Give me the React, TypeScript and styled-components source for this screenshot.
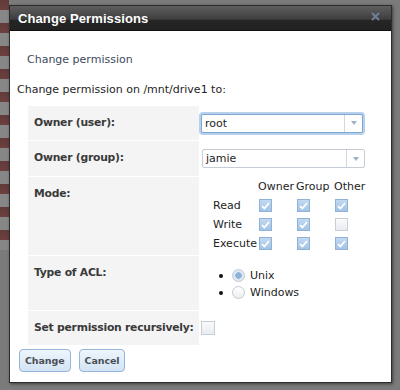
import styled, { createGlobalStyle } from "styled-components";

const GlobalStyle = createGlobalStyle`
  html, body {
    margin: 0;
    padding: 0;
    background: #7b7b7b;
  }
  body {
    font-family: "DejaVu Sans", Verdana, sans-serif;
  }
`;

const Page = styled.div`
  position: relative;
  width: 400px;
  height: 390px;
  overflow: hidden;
  background: #7b7b7b;
`;

const Backdrop = styled.div`
  position: absolute;
  left: 0;
  top: 0;
  width: 9px;
  height: 250px;
  background: repeating-linear-gradient(
    180deg,
    #5a2a2a 0px,
    #6b3030 10px,
    #8a8a8a 10px,
    #8a8a8a 23px
  );
  opacity: 0.8;
`;

const Dialog = styled.div`
  position: absolute;
  left: 9px;
  top: 5px;
  width: 381px;
  height: 376px;
  border: 1px solid #2c2c2c;
  box-shadow: 1px 1px 3px rgba(0, 0, 0, 0.5);
  background: #fff;
  display: flex;
  flex-direction: column;
`;

const TitleBar = styled.div`
  height: 24px;
  display: flex;
  align-items: center;
  justify-content: space-between;
  padding: 0 11px 0 8px;
  background: linear-gradient(180deg, #5e5e5e 0%, #3e3e3e 55%, #252525 60%, #222 100%);
  border-bottom: 1px solid #111;
`;

const Title = styled.span`
  color: #fff;
  font-family: "Liberation Sans", Arial, sans-serif;
  font-weight: bold;
  font-size: 13px;
  letter-spacing: 0.1px;
`;

const CloseIcon = styled.span`
  display: flex;
  width: 9px;
  height: 9px;
  margin-top: -3px;
`;

const Body = styled.div`
  flex: 1;
  padding: 0 0 0 7px;
  display: flex;
  flex-direction: column;
`;

const Subtitle = styled.div`
  margin: 22px 0 0 10px;
  font-size: 11px;
  color: #3d4a5c;
  line-height: 14px;
`;

const Intro = styled.div`
  margin: 16px 0 0 0;
  font-size: 11px;
  color: #1e1e1e;
  line-height: 14px;
`;

const FormTable = styled.div`
  margin: 9px 0 0 11px;
  display: grid;
  grid-template-columns: 171px 1fr;
  row-gap: 1px;
`;

const LabelCell = styled.div<{ h: number }>`
  background: #f4f4f4;
  height: ${({ h }) => h}px;
  padding: 10px 0 0 6px;
  box-sizing: border-box;
  font-weight: bold;
  font-size: 10.8px;
  letter-spacing: -0.25px;
  color: #3a3a3a;
  white-space: nowrap;
`;

const ValueCell = styled.div<{ h: number }>`
  height: ${({ h }) => h}px;
  padding-left: 2px;
  box-sizing: border-box;
  display: flex;
  align-items: center;
`;

const Select = styled.div<{ focused?: boolean }>`
  width: ${({ focused }) => (focused ? 160 : 161)}px;
  height: 17px;
  margin-left: ${({ focused }) => (focused ? 0 : 1)}px;
  display: flex;
  background: #fff;
  border: 1px solid ${({ focused }) => (focused ? "#7fa6d2" : "#c6ccd4")};
  box-shadow: ${({ focused }) => (focused ? "0 0 0 2px #b7d0ec" : "none")};
  border-radius: 2px;
  font-size: 11px;
  color: #1e1e1e;
`;

const SelectText = styled.span`
  flex: 1;
  padding-left: 3px;
  line-height: 17px;
`;

const SelectArrow = styled.span`
  width: 17px;
  border-left: 1px solid #d2d7de;
  display: flex;
  align-items: center;
  justify-content: center;
  &::after {
    content: "";
    border-left: 3.5px solid transparent;
    border-right: 3.5px solid transparent;
    border-top: 4px solid #9fb1c6;
  }
`;

const ModeGrid = styled.div`
  display: grid;
  grid-template-columns: 46px 38px 38px 38px;
  grid-auto-rows: 19px;
  align-items: center;
  margin: 0 0 0 12px;
  font-size: 11px;
  color: #1e1e1e;
  align-self: flex-start;
`;

const ModeHead = styled.span`
  justify-self: start;
  margin-left: -1px;
`;

const Box = styled.span<{ checked?: boolean; size?: number }>`
  width: ${({ size }) => size ?? 13}px;
  height: ${({ size }) => size ?? 13}px;
  box-sizing: border-box;
  border: 1px solid ${({ checked }) => (checked ? "#8fb2d6" : "#c8ced6")};
  background: ${({ checked }) =>
    checked
      ? "linear-gradient(180deg, #c2d9f0 0%, #a3c4e5 100%)"
      : "linear-gradient(180deg, #fafafa 0%, #e8ecf0 100%)"};
  display: flex;
  align-items: center;
  justify-content: center;
`;

const AclList = styled.ul`
  margin: 11px 0 0 0;
  padding: 0 0 0 18px;
  list-style: none;
  font-size: 11px;
  color: #1e1e1e;
  align-self: flex-start;
`;

const AclItem = styled.li`
  height: 17px;
  display: flex;
  align-items: center;
  gap: 5px;
  &::before {
    content: "";
    width: 4px;
    height: 4px;
    border-radius: 50%;
    background: #111;
    margin-right: 4px;
  }
`;

const Radio = styled.span<{ checked?: boolean }>`
  width: 13px;
  height: 13px;
  border-radius: 50%;
  box-sizing: border-box;
  border: 1px solid #c3c9d1;
  background: ${({ checked }) =>
    checked
      ? "radial-gradient(circle, #8fb2d8 0 3px, #dfe9f4 3.5px)"
      : "linear-gradient(180deg, #fff, #eceff2)"};
`;

const Buttons = styled.div`
  display: flex;
  gap: 8px;
  margin: 4px 0 0 2px;
`;

const Button = styled.button`
  height: 23px;
  padding: 0 5px;
  border: 1px solid #93b6da;
  border-radius: 4px;
  background: linear-gradient(180deg, #eef5fb 0%, #d3e4f4 100%);
  font-family: "DejaVu Sans", Verdana, sans-serif;
  font-weight: bold;
  font-size: 9.5px;
  letter-spacing: -0.1px;
  color: #4a4f57;
`;

const Check = () => (
  <svg width="9" height="8" viewBox="0 0 9 8">
    <path d="M1 4.2 L3.4 6.5 L8 1" fill="none" stroke="#fff" strokeWidth="1.8" />
  </svg>
);

const perms: { label: string; values: boolean[] }[] = [
  { label: "Read", values: [true, true, true] },
  { label: "Write", values: [true, true, false] },
  { label: "Execute", values: [true, true, true] },
];

export default function App() {
  return (
    <Page>
      <GlobalStyle />
      <Backdrop />
      <Dialog>
        <TitleBar>
          <Title>Change Permissions</Title>
          <CloseIcon>
            <svg width="9" height="9" viewBox="0 0 9 9">
              <path d="M1 1 L8 8 M8 1 L1 8" stroke="#6f7f99" strokeWidth="2" />
            </svg>
          </CloseIcon>
        </TitleBar>
        <Body>
          <Subtitle>Change permission</Subtitle>
          <Intro>Change permission on /mnt/drive1 to:</Intro>
          <FormTable>
            <LabelCell h={34}>Owner (user):</LabelCell>
            <ValueCell h={34}>
              <Select focused>
                <SelectText>root</SelectText>
                <SelectArrow />
              </Select>
            </ValueCell>

            <LabelCell h={35}>Owner (group):</LabelCell>
            <ValueCell h={35}>
              <Select>
                <SelectText>jamie</SelectText>
                <SelectArrow />
              </Select>
            </ValueCell>

            <LabelCell h={78}>Mode:</LabelCell>
            <ValueCell h={78}>
              <ModeGrid>
                <span />
                <ModeHead>Owner</ModeHead>
                <ModeHead>Group</ModeHead>
                <ModeHead>Other</ModeHead>
                {perms.map((p) => [
                  <span key={p.label}>{p.label}</span>,
                  ...p.values.map((v, i) => (
                    <Box key={p.label + i} checked={v}>
                      {v && <Check />}
                    </Box>
                  )),
                ])}
              </ModeGrid>
            </ValueCell>

            <LabelCell h={54}>Type of ACL:</LabelCell>
            <ValueCell h={54}>
              <AclList>
                <AclItem>
                  <Radio checked />
                  Unix
                </AclItem>
                <AclItem>
                  <Radio />
                  Windows
                </AclItem>
              </AclList>
            </ValueCell>

            <LabelCell h={34}>Set permission recursively:</LabelCell>
            <ValueCell h={34}>
              <Box size={14} />
            </ValueCell>
          </FormTable>
          <Buttons>
            <Button>Change</Button>
            <Button>Cancel</Button>
          </Buttons>
        </Body>
      </Dialog>
    </Page>
  );
}
